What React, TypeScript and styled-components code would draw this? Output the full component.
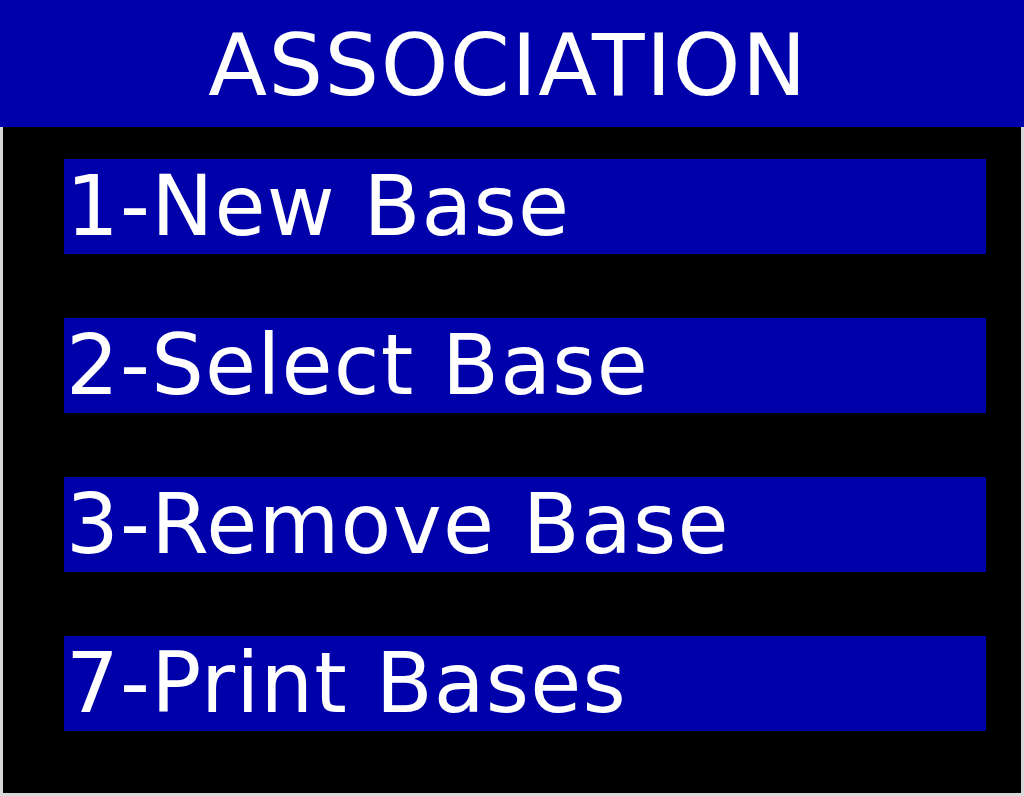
import React from "react";
import styled, { createGlobalStyle } from "styled-components";

const GlobalStyle = createGlobalStyle`
  html, body {
    margin: 0;
    padding: 0;
    background: #d8d8d8;
  }
  body {
    font-family: "DejaVu Sans", Verdana, sans-serif;
  }
`;

const Screen = styled.div`
  width: 1024px;
  height: 796px;
  display: flex;
  flex-direction: column;
  background: #d8d8d8;
`;

const Header = styled.header`
  height: 127px;
  flex-shrink: 0;
  display: flex;
  align-items: center;
  justify-content: center;
  background: #0000aa;
  color: #ffffff;
  font-size: 86px;
  letter-spacing: 1.5px;
  padding-right: 8px;
  padding-top: 2px;
  box-sizing: border-box;
`;

const Panel = styled.main`
  flex: 1;
  margin: 0 3px 3px 3px;
  background: #000000;
  padding: 32px 35px 0 61px;
  display: flex;
  flex-direction: column;
  gap: 64px;
`;

const MenuItem = styled.div`
  height: 95px;
  display: flex;
  align-items: center;
  padding-left: 2px;
  background: #0000aa;
  color: #ffffff;
  font-size: 83px;
  letter-spacing: 1.2px;
  white-space: nowrap;
`;

const items = ["1-New Base", "2-Select Base", "3-Remove Base", "7-Print Bases"];

const App = () => {
  return (
    <>
      <GlobalStyle />
      <Screen>
        <Header>ASSOCIATION</Header>
        <Panel>
          {items.map((label) => (
            <MenuItem key={label}>{label}</MenuItem>
          ))}
        </Panel>
      </Screen>
    </>
  );
};

export default App;
